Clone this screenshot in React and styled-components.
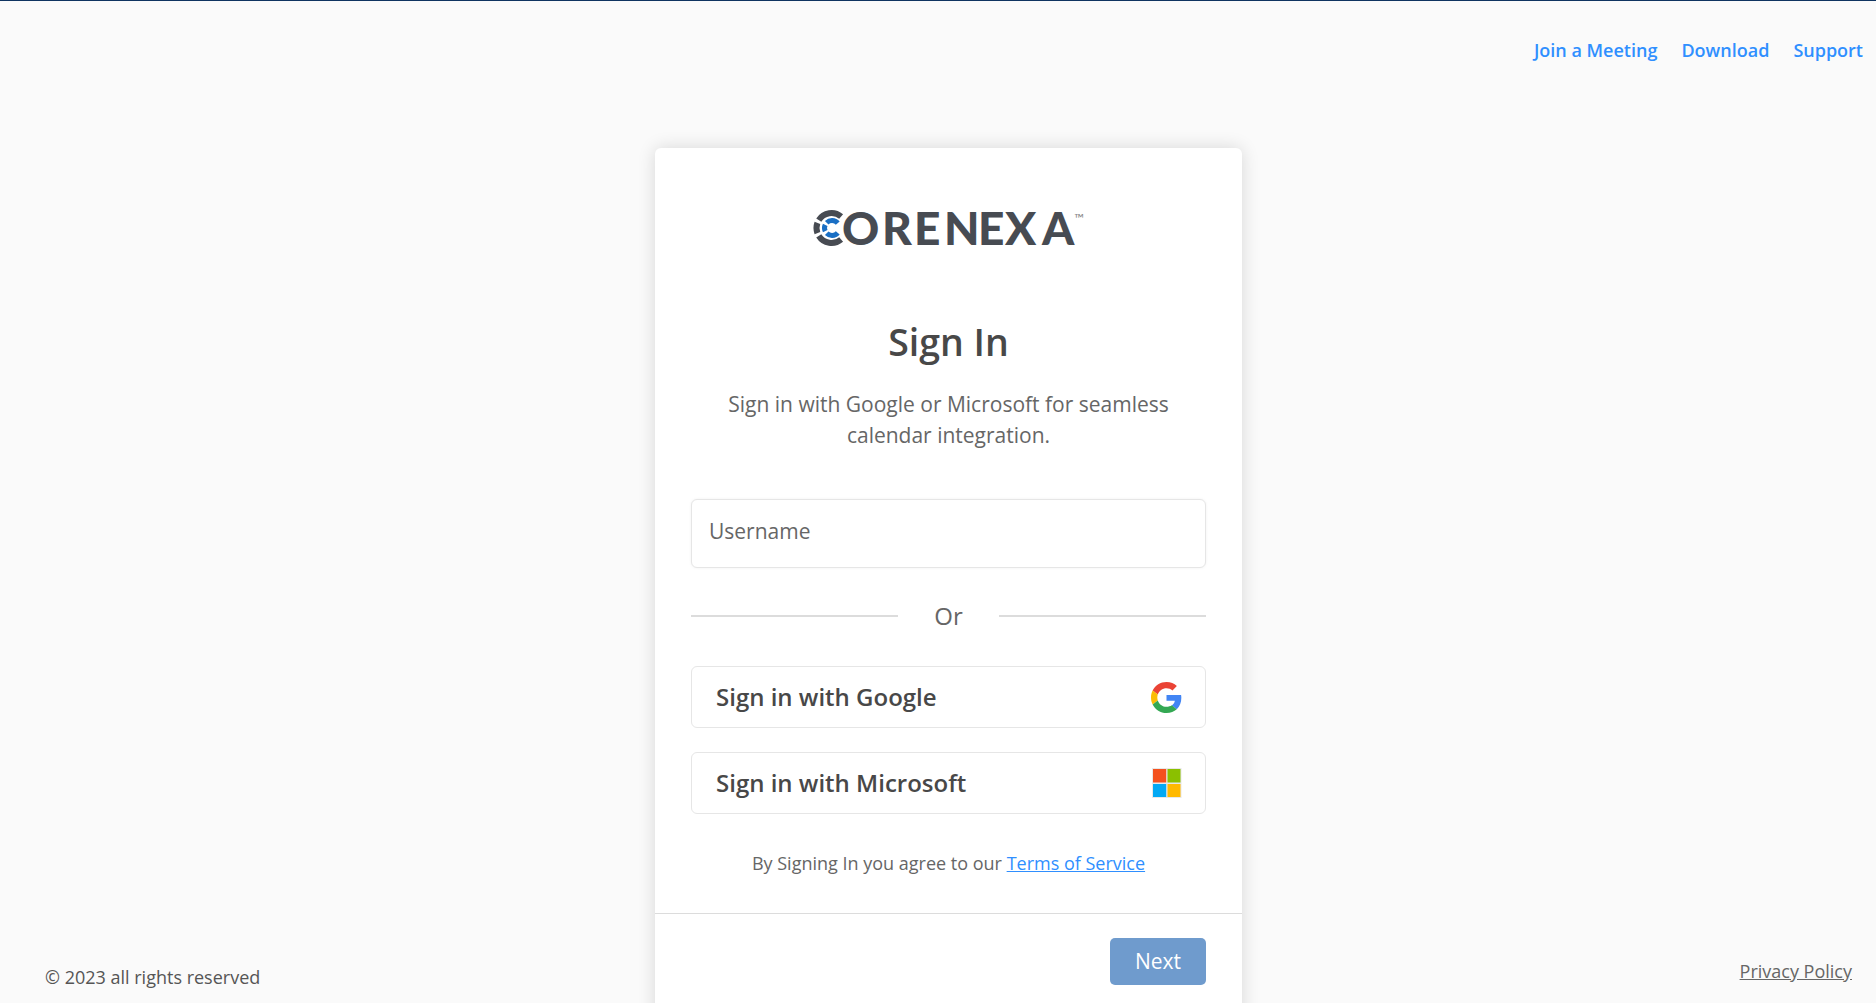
import React from "react";
import styled, { createGlobalStyle } from "styled-components";

const Global = createGlobalStyle`
  html, body { margin: 0; padding: 0; height: 100%; background: #fafafa; }
  body { font-family: "Open Sans", "Noto Sans", sans-serif; overflow: hidden; }
  * { box-sizing: border-box; }
`;

const Page = styled.div`
  height: 1003px;
  overflow: hidden;
  background: #fafafa;
  border-top: 1px solid #0f3460;
  display: grid;
  grid-template-columns: 655px 587px 1fr;
  grid-template-rows: 147px minmax(0, 1fr);
`;

const Nav = styled.nav`
  grid-column: 1 / 4;
  display: flex;
  justify-content: flex-end;
  align-items: flex-start;
  gap: 24px;
  padding: 36px 13px 0 0;
`;

const NavLink = styled.a`
  font-size: 18px;
  line-height: 26px;
  font-weight: 600;
  color: #2f8fff;
  text-decoration: none;
`;

const FootLeft = styled.div`
  align-self: end;
  padding: 0 0 14px 45px;
  font-size: 18px;
  line-height: 24px;
  color: #555;
`;

const FootRight = styled.div`
  align-self: end;
  display: flex;
  justify-content: flex-end;
  padding: 0 24px 20px 0;
`;

const PrivacyLink = styled.a`
  font-size: 18px;
  line-height: 24px;
  color: #666;
  text-decoration: underline;
`;

const Card = styled.main`
  height: 900px;
  background: #fff;
  border-radius: 6px;
  box-shadow: 0 0 18px rgba(0, 0, 0, 0.14);
  display: flex;
  flex-direction: column;
`;

const Body = styled.div`
  padding: 60px 36px 0;
  height: 766px;
  border-bottom: 1px solid #dcdcdc;
  display: flex;
  flex-direction: column;
`;

const LogoWrap = styled.div`
  display: flex;
  justify-content: center;
  height: 44px;
`;

const LogoGraphic = styled.svg`
  width: 276px;
  height: 44px;
  overflow: visible;
`;

const Title = styled.h1`
  margin: 65px 0 0;
  text-align: center;
  font-size: 37.5px;
  line-height: 50px;
  font-weight: 600;
  color: #484848;
`;

const Desc = styled.p`
  margin: 22px 0 0;
  text-align: center;
  font-size: 21px;
  line-height: 31px;
  color: #666;
`;

const Field = styled.input`
  margin-top: 48px;
  width: 100%;
  height: 69px;
  flex: none;
  padding: 0 17px 5px;
  border: 1px solid #e6e6e6;
  border-radius: 6px;
  box-shadow: 0 0 3px rgba(0, 0, 0, 0.06);
  font: 400 21px "Open Sans", sans-serif;
  color: #666;
  outline: none;
  &::placeholder { color: #666; opacity: 1; }
`;

const OrRow = styled.div`
  margin-top: 33px;
  display: flex;
  align-items: center;
  gap: 36px;
  font-size: 24px;
  line-height: 30px;
  color: #666;
  &::before, &::after {
    content: "";
    flex: 1;
    height: 2px;
    background: #dcdcdc;
  }
`;

const ProviderButton = styled.button`
  margin-top: ${(p) => p.$gap}px;
  width: 100%;
  height: 62px;
  flex: none;
  padding: 0 23px 2px 24px;
  display: flex;
  align-items: center;
  justify-content: space-between;
  background: #fff;
  border: 1px solid #e6e6e6;
  border-radius: 6px;
  font: 600 24px "Open Sans", sans-serif;
  color: #484848;
  svg { margin-bottom: -2px; }
`;

const Terms = styled.p`
  margin: 37px 0 0;
  text-align: center;
  font-size: 18px;
  line-height: 24px;
  color: #666;
`;

const TermsLink = styled.a`
  color: #2f8fff;
  text-decoration: underline;
`;

const Foot = styled.div`
  padding: 24px 36px 0;
  display: flex;
  justify-content: flex-end;
`;

const NextButton = styled.button`
  width: 96px;
  height: 47px;
  padding: 0 0 2px;
  border: none;
  border-radius: 5px;
  background: #6f9bcd;
  color: #fff;
  font: 500 21px "Open Sans", sans-serif;
`;

const polar = (cx, cy, r, deg) => {
  const a = (deg * Math.PI) / 180;
  return `${(cx + r * Math.cos(a)).toFixed(2)} ${(cy - r * Math.sin(a)).toFixed(2)}`;
};
const arc = (cx, cy, r, from, to) =>
  `M${polar(cx, cy, r, from)}A${r} ${r} 0 ${to - from > 180 ? 1 : 0} 0 ${polar(cx, cy, r, to)}`;

const Logo = () => (
  <LogoGraphic viewBox="0 0 276 44" aria-label="Corenexa">
    <g fill="none" stroke="#474b52" strokeWidth="6">
      <path d={arc(20.5, 20, 15, 50, 148)} />
      <path d={arc(20.5, 20, 15, 160, 200)} />
      <path d={arc(20.5, 20, 15, 212, 310)} />
    </g>
    <g fill="none" stroke="#1a6fc4" strokeWidth="5">
      <path d={arc(21, 20, 7.5, 40, 135)} />
      <path d={arc(21, 20, 7.5, 155, 205)} />
      <path d={arc(21, 20, 7.5, 225, 320)} />
    </g>
    <text
      x="31 71 103 133 167 194 231"
      y="37"
      fontFamily="Lato, sans-serif"
      fontWeight="900"
      fontSize="46"
      fill="#474b52"
    >
      ORENEXA
    </text>
    <text x="263" y="15" fontFamily="Lato, sans-serif" fontSize="13" fill="#888">™</text>
  </LogoGraphic>
);

const GoogleIcon = () => (
  <svg width="31" height="31" viewBox="0 0 48 48" aria-hidden="true">
    <path fill="#EA4335" d="M24 9.5c3.54 0 6.71 1.22 9.21 3.6l6.85-6.85C35.9 2.38 30.47 0 24 0 14.62 0 6.51 5.38 2.56 13.22l7.98 6.19C12.43 13.72 17.74 9.5 24 9.5z" />
    <path fill="#4285F4" d="M46.98 24.55c0-1.57-.15-3.09-.38-4.55H24v9.02h12.94c-.58 2.96-2.26 5.48-4.78 7.18l7.73 6c4.51-4.18 7.09-10.36 7.09-17.65z" />
    <path fill="#FBBC05" d="M10.53 28.59c-.48-1.45-.76-2.99-.76-4.59s.27-3.14.76-4.59l-7.98-6.19C.92 16.46 0 20.12 0 24c0 3.88.92 7.54 2.56 10.78l7.97-6.19z" />
    <path fill="#34A853" d="M24 48c6.48 0 11.93-2.13 15.89-5.81l-7.73-6c-2.15 1.45-4.92 2.3-8.16 2.3-6.26 0-11.57-4.22-13.47-9.91l-7.98 6.19C6.51 42.62 14.62 48 24 48z" />
  </svg>
);

const MicrosoftIcon = () => (
  <svg width="31" height="30" viewBox="0 0 31 30" aria-hidden="true">
    <rect x="1" y="0" width="29.5" height="30" fill="#e8e8e8" />
    <rect x="2" y="1" width="13.2" height="13.5" fill="#f4511e" />
    <rect x="16.5" y="1" width="13" height="13.5" fill="#8bc000" />
    <rect x="2" y="16" width="13.2" height="13" fill="#03a9f4" />
    <rect x="16.5" y="16" width="13" height="13" fill="#ffb900" />
  </svg>
);

export default function App() {
  return (
    <Page>
      <Global />
      <Nav>
        <NavLink href="#">Join a Meeting</NavLink>
        <NavLink href="#">Download</NavLink>
        <NavLink href="#">Support</NavLink>
      </Nav>
      <FootLeft>© 2023 all rights reserved</FootLeft>
      <Card>
        <Body>
          <LogoWrap><Logo /></LogoWrap>
          <Title>Sign In</Title>
          <Desc>
            Sign in with Google or Microsoft for seamless
            <br />
            calendar integration.
          </Desc>
          <Field placeholder="Username" />
          <OrRow>Or</OrRow>
          <ProviderButton $gap={35}>
            Sign in with Google
            <GoogleIcon />
          </ProviderButton>
          <ProviderButton $gap={24}>
            Sign in with Microsoft
            <MicrosoftIcon />
          </ProviderButton>
          <Terms>
            By Signing In you agree to our <TermsLink href="#">Terms of Service</TermsLink>
          </Terms>
        </Body>
        <Foot>
          <NextButton>Next</NextButton>
        </Foot>
      </Card>
      <FootRight>
        <PrivacyLink href="#">Privacy Policy</PrivacyLink>
      </FootRight>
    </Page>
  );
}
